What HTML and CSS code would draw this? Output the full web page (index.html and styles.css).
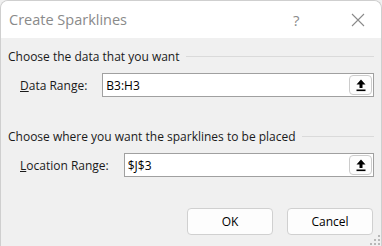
FILE: index.html
```html
<!DOCTYPE html>
<html lang="en">
<head>
  <meta charset="UTF-8">
  <title>Create Sparklines</title>
  <link rel="stylesheet" href="styles.css">
</head>
<body>
  <div class="window">
    <div class="titlebar">
      <span class="title">Create Sparklines</span>
      <span class="help">?</span>
      <span class="close">
        <svg width="14" height="14" viewBox="0 0 14 14"><path d="M1 1L13 13M13 1L1 13" stroke="#8a8a8a" stroke-width="1.1"/></svg>
      </span>
    </div>

    <div class="content">
      <div class="group-head">
        <span>Choose the data that you want</span>
        <span class="rule"></span>
      </div>
      <div class="field">
        <label><u>D</u>ata Range:</label>
        <div class="range-box">
          <span class="value">B3:H3</span>
          <button class="pick">
            <svg width="10" height="13" viewBox="0 0 10 13"><path d="M5 0.5L9.5 5.5H6.5V9H3.5V5.5H0.5Z" fill="#000"/><rect x="0.5" y="10.5" width="9" height="1.6" fill="#000"/></svg>
          </button>
        </div>
      </div>

      <div class="group-head second">
        <span>Choose where you want the sparklines to be placed</span>
        <span class="rule"></span>
      </div>
      <div class="field">
        <label><u>L</u>ocation Range:</label>
        <div class="range-box">
          <span class="value">$J$3</span>
          <button class="pick">
            <svg width="10" height="13" viewBox="0 0 10 13"><path d="M5 0.5L9.5 5.5H6.5V9H3.5V5.5H0.5Z" fill="#000"/><rect x="0.5" y="10.5" width="9" height="1.6" fill="#000"/></svg>
          </button>
        </div>
      </div>

      <div class="actions">
        <button class="btn">OK</button>
        <button class="btn">Cancel</button>
      </div>

      <div class="grip">
        <svg width="10" height="10" viewBox="0 0 10 10" fill="#b8b8b8">
          <rect x="8" y="0" width="2" height="2"/>
          <rect x="4" y="4" width="2" height="2"/><rect x="8" y="4" width="2" height="2"/>
          <rect x="0" y="8" width="2" height="2"/><rect x="4" y="8" width="2" height="2"/><rect x="8" y="8" width="2" height="2"/>
        </svg>
      </div>
    </div>
  </div>
</body>
</html>
```

FILE: styles.css
```css
body {
  margin: 0;
  padding: 0;
  background: #f0f0f0;
  font-family: "Open Sans", "Noto Sans", sans-serif;
  color: #1a1a1a;
}

.window {
  width: 382px;
  height: 246px;
  box-sizing: border-box;
  border: 1px solid #cfcfcf;
  border-bottom: none;
  border-radius: 8px 8px 0 0;
  overflow: hidden;
  display: flex;
  flex-direction: column;
  background: #f0f0f0;
}

.titlebar {
  height: 37px;
  background: #ffffff;
  display: flex;
  align-items: center;
  flex-shrink: 0;
}

.title {
  margin-left: 8px;
  font-size: 14.5px;
  color: #8a8a8a;
  flex: 1;
}

.help {
  font-size: 15px;
  color: #8a8a8a;
  width: 14px;
  margin-right: 44px;
}

.close {
  display: flex;
  margin-right: 16px;
}

.content {
  position: relative;
  flex: 1;
  padding: 9px 7px 0 7px;
  font-size: 12px;
}

.group-head {
  display: flex;
  align-items: center;
  gap: 6px;
  height: 18px;
}

.group-head.second {
  margin-top: 30px;
}

.rule {
  flex: 1;
  border-top: 1px solid #dadada;
  margin-top: 1px;
}

.field {
  display: flex;
  align-items: center;
  margin-top: 8px;
  padding-left: 12px;
}

.field label {
  margin-right: 15px;
}

.range-box {
  flex: 1;
  height: 24px;
  box-sizing: border-box;
  border: 1px solid #a0a0a0;
  background: #ffffff;
  display: flex;
  align-items: center;
  padding-left: 3px;
}

.value {
  flex: 1;
  color: #000;
}

.pick {
  width: 23px;
  height: 20px;
  margin-right: 1px;
  padding: 0;
  border: 1px solid #cccccc;
  border-radius: 4px;
  background: #fdfdfd;
  display: flex;
  align-items: center;
  justify-content: center;
}

.actions {
  display: flex;
  justify-content: flex-end;
  gap: 14px;
  margin-top: 31px;
  padding-right: 1px;
}

.btn {
  width: 86px;
  height: 27px;
  font-family: inherit;
  font-size: 12px;
  color: #000;
  background: #fdfdfd;
  border: 1px solid #d0d0d0;
  border-radius: 4px;
}

.grip {
  position: absolute;
  right: 1px;
  bottom: 1px;
  display: flex;
}
```
